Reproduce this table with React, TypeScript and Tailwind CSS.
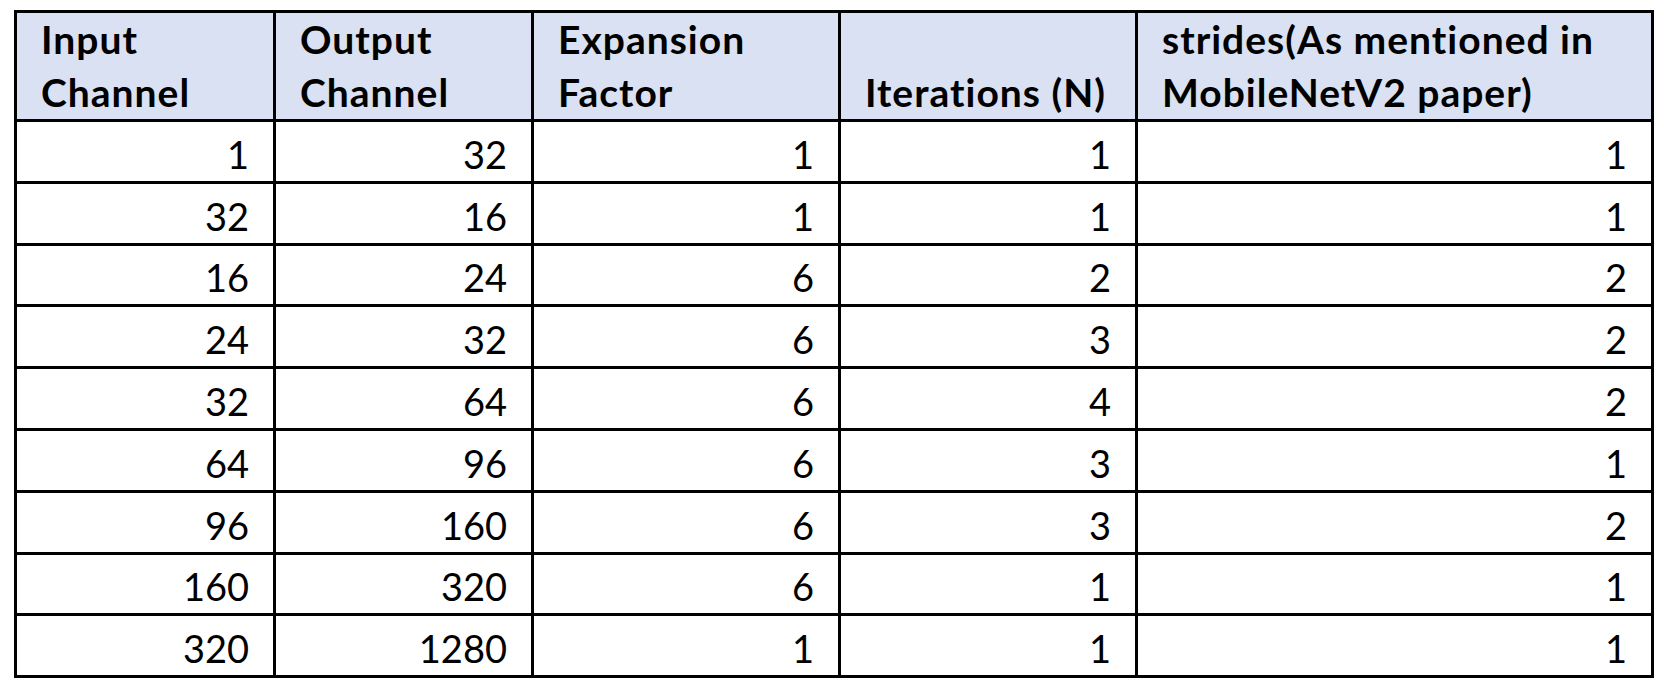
const headers = [
  ["Input", "Channel"],
  ["Output", "Channel"],
  ["Expansion", "Factor"],
  ["Iterations (N)"],
  ["strides(As mentioned in", "MobileNetV2 paper)"],
];

const rows = [
  [1, 32, 1, 1, 1],
  [32, 16, 1, 1, 1],
  [16, 24, 6, 2, 2],
  [24, 32, 6, 3, 2],
  [32, 64, 6, 4, 2],
  [64, 96, 6, 3, 1],
  [96, 160, 6, 3, 2],
  [160, 320, 6, 1, 1],
  [320, 1280, 1, 1, 1],
];

export default function App() {
  return (
    <div className="w-[1664px] h-[694px] bg-white pl-[14px] pt-[10px] font-['Lato',sans-serif] text-black">
      <div className="grid w-[1640px] grid-cols-[256px_255px_304px_294px_513px] grid-rows-[106px_repeat(9,58.8px)] gap-[3px] bg-black p-[3px]">
        {/* header row */}
        {headers.map((lines, i) => (
          <div
            key={i}
            className="flex flex-col justify-end bg-[#d9e1f2] px-6 text-[39px] font-bold leading-[53px] tracking-[1px] whitespace-nowrap"
          >
            {lines.map((l) => (
              <span key={l}>{l}</span>
            ))}
          </div>
        ))}
        {rows.map((row, r) =>
          row.map((v, c) => (
            <div
              key={`${r}-${c}`}
              className="flex items-end justify-end bg-white px-6 text-[38px] leading-[53px]"
            >
              {v}
            </div>
          ))
        )}
      </div>
    </div>
  );
}
